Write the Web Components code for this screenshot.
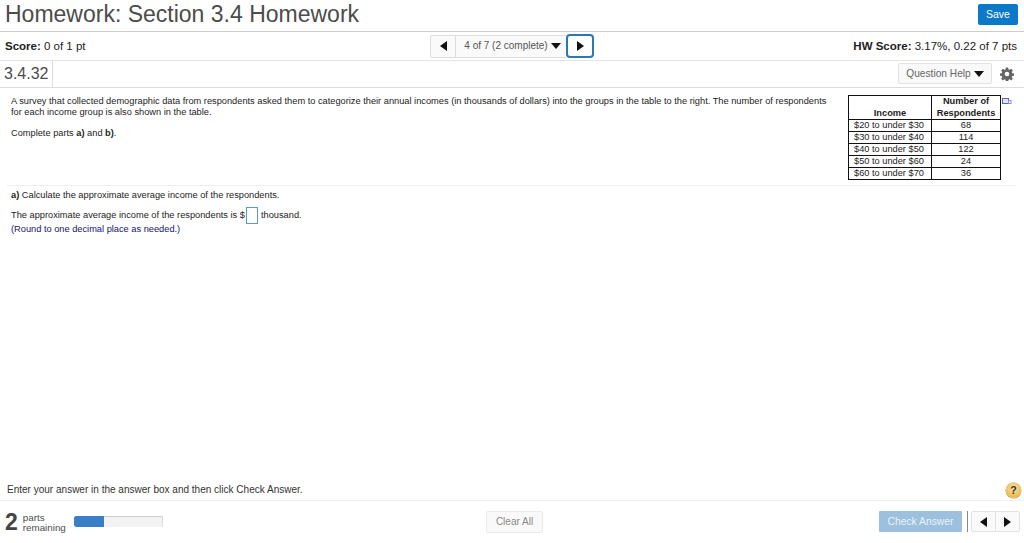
<!DOCTYPE html>
<html><head><meta charset="utf-8">
<style>
html,body{margin:0;padding:0;background:#fff;overflow:hidden}
body{width:1024px;height:543px;font-family:"Liberation Sans",Arial,sans-serif;color:#222}
hw-app{display:flex;flex-direction:column;width:1024px;height:543px}
</style></head><body>
<template id="t-app">
<style>
:host{display:flex;flex-direction:column;width:1024px;height:543px;font:11px/12px "Liberation Sans",Arial,sans-serif;color:#222}
.title{box-sizing:border-box;border-bottom:1px solid #ccc;display:flex;align-items:center;justify-content:space-between;padding:0 6px 3px 5px;height:32px}
h1{margin:0;font-weight:400;font-size:23px;line-height:28px;color:#4c4c4c}
.save{width:40px;height:21px;background:#0b78c8;border-radius:2px;color:#fff;font-size:10.5px;line-height:21px;text-align:center;margin-top:1px}
.score{height:29px;box-sizing:border-box;border-bottom:1px solid #e4e4e4;display:grid;grid-template-columns:1fr auto 1fr;align-items:center;padding:0 7px 0 5px;font-size:11.5px}
.score b{color:#222}
.score .r{text-align:right}
.score hw-pager{margin-left:2px}
.q{height:27px;box-sizing:border-box;border-bottom:1px solid #ddd;display:flex;align-items:stretch;justify-content:space-between}
.q .num{width:53px;box-sizing:border-box;border-right:1px solid #ddd;padding-left:4px;font-size:16px;line-height:26px;color:#4c4c4c}
.q .tools{display:flex;align-items:center;gap:8px;padding-right:10px}
.q hw-btn{margin-top:-1px;padding-top:1px}
.body{flex:1;display:flex;flex-direction:column;padding:0 11px;font-size:9.26px;line-height:11px;color:#1d1d1d;min-height:0}
.top{display:flex;justify-content:space-between;padding:7px 0 0 4px;height:98px;box-sizing:border-box;border-bottom:1px solid #eee;margin:0 -3px 0 -4px}
.top p{margin:0 0 10px}
.txt{width:822px;padding-top:1px}
.side{display:flex;gap:1px;margin-right:4px}
.side svg{margin-top:3px}
.a{padding-top:4px}
.a p{margin:0}
.a .l1{margin-bottom:6px}
.ans{display:flex;align-items:center;height:16px}
.box{display:inline-block;width:10px;height:15px;border:1px solid #5b9bc5;margin:0 3px 0 1px;background:#fff}
.hint{color:#14146e;margin-top:1px!important}
.foot{height:26px;box-sizing:border-box;margin:auto -11px 0;border-bottom:1px solid #f1f1f1;display:flex;align-items:center;justify-content:space-between;padding:4px 3px 0 7px;font-size:10.03px;color:#333}
.foot hw-help{margin-top:2px}
.bar{height:42px;box-sizing:border-box;display:grid;grid-template-columns:1fr auto 1fr;align-items:start;padding:10px 4px 0 5px}
.rem{display:flex;align-items:flex-start;gap:5px;color:#4c4c4c}
.two{font-size:23px;line-height:23px;font-weight:700;color:#444}
.parts{font-size:9.8px;line-height:10px;padding-top:2px;width:46px}
.prog{width:89px;height:11px;border-radius:2px;background:#f3f3f3;box-shadow:inset 0 1px 1px #ccc,inset -1px 0 0 #ddd;overflow:hidden;margin:5px 0 0 0}
.prog i{display:block;width:30px;height:11px;background:#3a7fc6;border-radius:2px 0 0 2px}
.right{display:flex;justify-content:flex-end;align-items:center}
.check{width:83px;height:21px;background:#9cc0dd;color:#eaf2f8;font-size:10.3px;line-height:21px;text-align:center;border-radius:1px}
.sep{width:1px;height:21px;background:#888;margin:0 3px 0 5px}
.clear{margin-left:4px;color:#888;font-size:10px;border-color:#eaeaea}
</style>
<div class="title"><h1>Homework: Section 3.4 Homework</h1><div class="save">Save</div></div>
<div class="score"><div><b>Score:</b> 0 of 1 pt</div><hw-pager></hw-pager><div class="r"><b>HW Score:</b> 3.17%, 0.22 of 7 pts</div></div>
<div class="q"><div class="num">3.4.32</div><div class="tools"><hw-btn w="94" h="21">Question Help <hw-tri dir="down"></hw-tri></hw-btn>
<svg width="14" height="14" viewBox="0 0 24 24"><path fill="#666" fill-rule="evenodd" d="M10 1h4l.6 3.1 2 .8 2.6-1.8 2.8 2.8-1.8 2.6.8 2 3 .5v4l-3 .6-.8 2 1.8 2.6-2.8 2.8-2.6-1.8-2 .8-.6 3h-4l-.6-3-2-.8-2.6 1.8-2.8-2.8 1.8-2.6-.8-2-3-.6v-4l3-.5.8-2-1.8-2.6 2.8-2.8 2.6 1.8 2-.8zM12 8a4 4 0 1 0 0 8 4 4 0 0 0 0-8z"/></svg></div></div>
<div class="body">
<div class="top"><div class="txt"><p>A survey that collected demographic data from respondents asked them to categorize their annual incomes (in thousands of dollars) into the groups in the table to the right. The number of respondents for each income group is also shown in the table.</p><p>Complete parts <b>a)</b> and <b>b)</b>.</p></div>
<div class="side"><hw-table></hw-table><svg width="10" height="7" viewBox="0 0 10 7"><rect x=".5" y=".5" width="6" height="5" fill="#dfe3f5" stroke="#5a66b0"/><rect x="6.5" y="2.5" width="2.5" height="3" fill="#fff" stroke="#8a93c8"/></svg></div></div>
<div class="a"><p class="l1"><b>a)</b> Calculate the approximate average income of the respondents.</p>
<p class="ans">The approximate average income of the respondents is $<span class="box"></span> thousand.</p>
<p class="hint">(Round to one decimal place as needed.)</p></div>
<div class="foot"><span>Enter your answer in the answer box and then click Check Answer.</span><hw-help></hw-help></div>
</div>
<div class="bar"><div class="rem"><span class="two">2</span><span class="parts">parts<br>remaining</span><div class="prog"><i></i></div></div>
<hw-btn class="clear" w="57" h="22">Clear All</hw-btn>
<div class="right"><div class="check">Check Answer</div><div class="sep"></div><hw-nav></hw-nav></div></div>
</template>

<template id="t-btn"><style>
:host{display:inline-flex;align-items:center;justify-content:center;gap:3px;box-sizing:border-box;border:1px solid #e2e2e2;border-radius:2px;background:#f9f9f9;color:#666;font-size:10.2px;line-height:12px}
</style><slot></slot></template>

<template id="t-tri"><style>
:host{display:inline-block;width:0;height:0;border-style:solid;border-color:transparent}
:host([dir=down]){border-width:6px 5px 0;border-top-color:#111}
:host([dir=left]){border-width:5px 7px 5px 0;border-right-color:#111}
:host([dir=right]){border-width:5px 0 5px 7px;border-left-color:#111}
</style></template>

<template id="t-pager"><style>
:host{display:flex;align-items:center;height:24px;font-size:10px;color:#555}
.c{display:flex;align-items:center;justify-content:center;box-sizing:border-box;height:23px;background:#fafafa;border:1px solid #ddd}
.l{width:25px;border-right:0;border-radius:2px 0 0 2px}
.m{width:111px;gap:3px;border-right:0;padding-left:3px}
.n{width:28px;height:24px;border:2px solid #2a78b8;border-radius:4px;background:#fff}
</style><div class="c l"><hw-tri dir="left"></hw-tri></div><div class="c m">4 of 7 (2 complete)<hw-tri dir="down"></hw-tri></div><div class="c n"><hw-tri dir="right"></hw-tri></div></template>

<template id="t-table"><style>
:host{display:block;font-size:9.26px;line-height:11px;color:#1d1d1d}
table{border-collapse:collapse;width:153px;table-layout:fixed}
th,td{border:1px solid #111;padding:0;text-align:center;height:11px}
th{line-height:11.5px;vertical-align:bottom;font-weight:700;height:23px}
th:first-child,td:first-child{width:82px}
td:first-child{text-align:left;padding-left:5px;box-sizing:border-box}
</style><table><tr><th>Income</th><th>Number of<br>Respondents</th></tr>
<tr><td>$20 to under $30</td><td>68</td></tr>
<tr><td>$30 to under $40</td><td>114</td></tr>
<tr><td>$40 to under $50</td><td>122</td></tr>
<tr><td>$50 to under $60</td><td>24</td></tr>
<tr><td>$60 to under $70</td><td>36</td></tr></table></template>

<template id="t-help"><style>
:host{display:flex;align-items:center;justify-content:center;width:15px;height:15px;border-radius:50%;background:radial-gradient(circle at 50% 35%,#fbe39a,#e5a93a);box-shadow:0 0 0 .5px #c9902c;color:#333;font:700 10.5px/15px "Liberation Sans",Arial,sans-serif}
</style>?</template>

<template id="t-nav"><style>
:host{display:flex;height:21px;box-sizing:border-box;border:1px solid #e2e2e2;border-radius:2px;background:#fafafa}
div{width:23px;display:flex;align-items:center;justify-content:center}
div+div{border-left:1px solid #e2e2e2}
</style><div><hw-tri dir="left"></hw-tri></div><div><hw-tri dir="right"></hw-tri></div></template>

<hw-app></hw-app>
<script>
function def(name,tpl,init){customElements.define(name,class extends HTMLElement{
  connectedCallback(){ if(this.shadowRoot) return; const r=this.attachShadow({mode:'open'}); r.appendChild(document.getElementById(tpl).content.cloneNode(true)); if(init) init(this);}
});}
def('hw-tri','t-tri');
def('hw-btn','t-btn',e=>{e.style.width=e.getAttribute('w')+'px';e.style.height=e.getAttribute('h')+'px';});
def('hw-pager','t-pager');
def('hw-table','t-table');
def('hw-help','t-help');
def('hw-nav','t-nav');
def('hw-app','t-app');
</script>
</body></html>
